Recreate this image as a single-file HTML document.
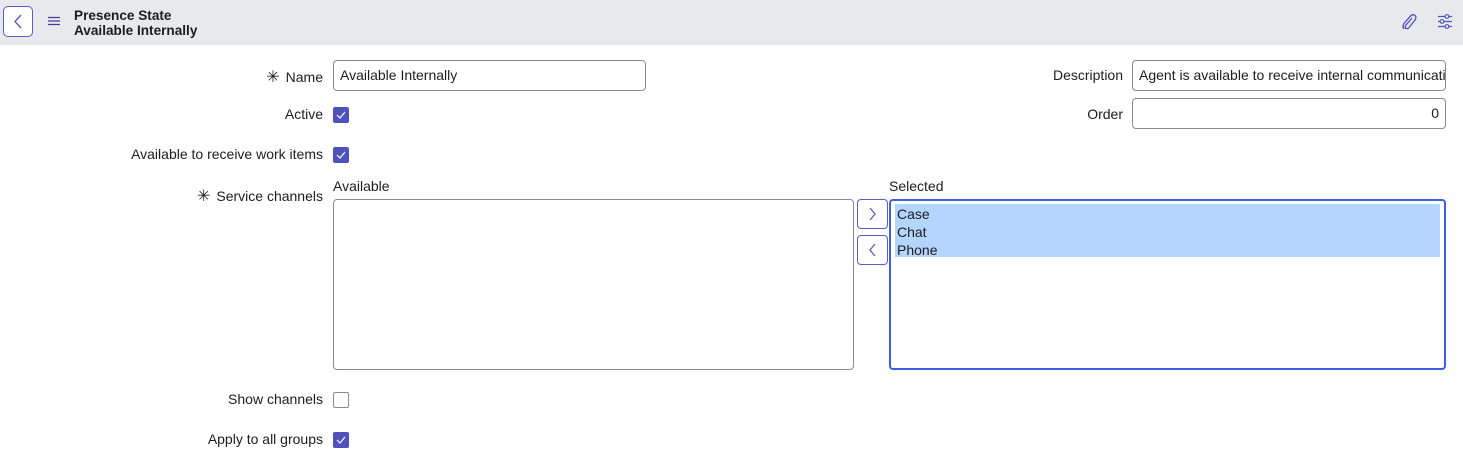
<!DOCTYPE html>
<html><head><style>
body{margin:0;width:1463px;height:462px;background:#fff;font-family:"Liberation Sans",sans-serif;color:#1d1d1d;position:relative;overflow:hidden}
.hdr{position:absolute;left:0;top:0;width:1463px;height:45px;background:#e8e9ed}
.abs{position:absolute}
.lbl{position:absolute;font-size:14px;text-align:right;white-space:nowrap}
.inp{position:absolute;border:1px solid #8c8c8c;border-radius:4px;height:30px;box-sizing:border-box;font-size:14px;line-height:29px;padding:0 6px;overflow:hidden;white-space:nowrap;background:#fff}
.cb{position:absolute;width:16px;height:16px;border-radius:2px;background:#4f52bd;box-sizing:border-box}
.cb svg{position:absolute;left:2px;top:2px}
.ast{font-size:16px;margin-right:6px}
.btn{position:absolute;width:31px;height:30px;border:1px solid #5a5dc4;border-radius:4px;box-sizing:border-box;background:#fff}
</style></head><body>
<div class="hdr"></div>
<div class="abs" style="left:3px;top:6px;width:30px;height:31px;border:1px solid #5a5dc4;border-radius:5px;box-sizing:border-box;background:#fff">
<svg width="28" height="29" viewBox="0 0 28 29"><path d="M17 8 L11 14.5 L17 21" fill="none" stroke="#5a5dc4" stroke-width="1.4"/></svg></div>
<svg class="abs" style="left:48px;top:16px" width="13" height="10"><path d="M0 1.5H12M0 5H12M0 8.5H12" stroke="#3d3f8f" stroke-width="1.3"/></svg>
<div class="abs" style="left:74px;top:8px;font-size:13.6px;font-weight:bold;line-height:15px">Presence State<br>Available Internally</div>
<svg class="abs" style="left:1401px;top:13px" width="16" height="18" viewBox="0 0 16 18"><path d="M11 5 L5 12 Q3 15 5.5 15.5 Q7 16 8.5 14 L14 7 Q16 3.5 13.5 2 Q11 1 9 3.5 L3 10.5 Q1 14 3 16" fill="none" stroke="#4f52bd" stroke-width="1.3"/></svg>
<svg class="abs" style="left:1437px;top:14px" width="16" height="15" viewBox="0 0 16 15"><g stroke="#4f52bd" stroke-width="1.2" fill="#fff"><path d="M1 2.5H15M1 7.5H15M1 12.5H15"/><circle cx="10" cy="2.5" r="1.8"/><circle cx="5" cy="7.5" r="1.8"/><circle cx="10" cy="12.5" r="1.8"/></g></svg>

<div class="lbl" style="right:1140px;top:67px"><span class="ast">✳</span>Name</div>
<div class="inp" style="left:333px;top:60px;width:313px;height:31px">Available Internally</div>
<div class="lbl" style="right:1140px;top:106px">Active</div>
<div class="cb" style="left:333px;top:107px"><svg width="12" height="12"><path d="M2 6 L5 9 L10 3" fill="none" stroke="#fff" stroke-width="1.2"/></svg></div>
<div class="lbl" style="right:1140px;top:146px">Available to receive work items</div>
<div class="cb" style="left:333px;top:147px"><svg width="12" height="12"><path d="M2 6 L5 9 L10 3" fill="none" stroke="#fff" stroke-width="1.2"/></svg></div>
<div class="lbl" style="right:1140px;top:186px"><span class="ast">✳</span>Service channels</div>

<div class="lbl" style="right:340px;top:67px">Description</div>
<div class="inp" style="left:1132px;top:60px;width:314px;height:31px">Agent is available to receive internal communications</div>
<div class="lbl" style="right:340px;top:106px">Order</div>
<div class="inp" style="left:1132px;top:98px;width:314px;height:31px;text-align:right">0</div>

<div class="abs" style="left:333px;top:178px;font-size:14px">Available</div>
<div class="abs" style="left:333px;top:199px;width:521px;height:171px;border:1px solid #8c8c8c;border-radius:4px;box-sizing:border-box"></div>
<div class="btn" style="left:857px;top:199px"><svg width="29" height="28"><path d="M12 8 L17 14 L12 20" fill="none" stroke="#5a5dc4" stroke-width="1.3"/></svg></div>
<div class="btn" style="left:857px;top:235px"><svg width="29" height="28"><path d="M17 8 L12 14 L17 20" fill="none" stroke="#5a5dc4" stroke-width="1.3"/></svg></div>
<div class="abs" style="left:889px;top:178px;font-size:14px">Selected</div>
<div class="abs" style="left:889px;top:199px;width:557px;height:171px;border:2px solid #3f5fe0;border-radius:4px;box-sizing:border-box">
<div style="margin:3px 4px 0 4px;background:#b4d5fe;font-size:14px;line-height:18px;padding-left:2px;padding-top:1px;height:53px;box-sizing:border-box">Case<br>Chat<br>Phone</div></div>

<div class="lbl" style="right:1140px;top:391px">Show channels</div>
<div class="cb" style="left:333px;top:392px;background:#fff;border:1px solid #8c8c8c"></div>
<div class="lbl" style="right:1140px;top:431px">Apply to all groups</div>
<div class="cb" style="left:333px;top:432px"><svg width="12" height="12"><path d="M2 6 L5 9 L10 3" fill="none" stroke="#fff" stroke-width="1.2"/></svg></div>
</body></html>
